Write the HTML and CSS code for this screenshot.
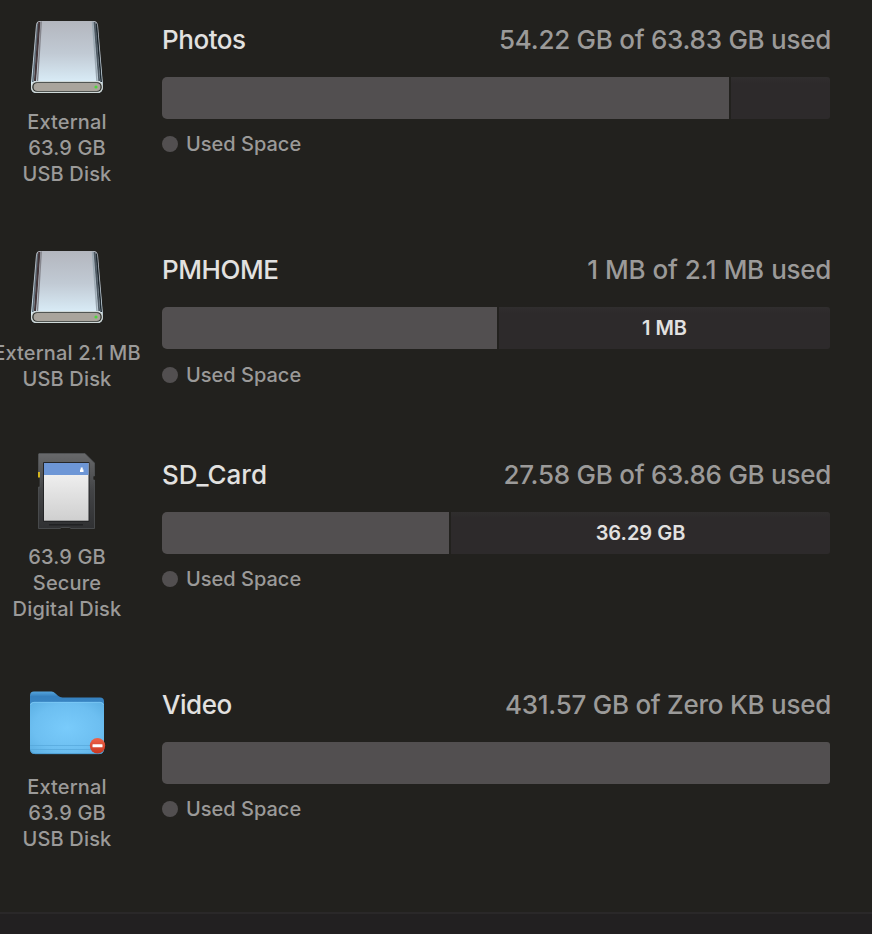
FILE: index.html
```html
<!DOCTYPE html>
<html lang="en">
<head>
    <meta charset="UTF-8">
    <meta name="viewport" content="width=device-width, initial-scale=1.0">
    <title>Storage</title>
    <link rel="stylesheet" href="styles.css">
</head>
<body>
    <svg class="defs" width="0" height="0">
        <defs>
            <linearGradient id="driveTop" x1="0" y1="0" x2="0" y2="1">
                <stop offset="0" stop-color="#b3b6be"/>
                <stop offset="0.45" stop-color="#c1cad4"/>
                <stop offset="0.85" stop-color="#d9ecf7"/>
            </linearGradient>
            <symbol id="drive" viewBox="0 0 80 80">
                <path d="M13 5h54q3 0 4 4l4.800 58v5q-.5 5-5 5H9q-4.500 0-5-5v-5L9 9q.5-4 4-4z" fill="url(#driveTop)"/>
                <path d="M10.800 7.500L5.800 66" stroke="#5d6b76" stroke-width="1.600" fill="none"/>
                <path d="M12.300 6L8 65" stroke="#43363a" stroke-width="2.200" fill="none"/>
                <path d="M14.300 5.500L10.500 65" stroke="#85868d" stroke-width="1.400" fill="none"/>
                <path d="M65.500 5.500L70 65" stroke="#9aa8b2" stroke-width="1.500" fill="none"/>
                <path d="M67.500 6L72.200 65" stroke="#4d5963" stroke-width="1.800" fill="none"/>
                <path d="M69.300 7.500L74.200 66" stroke="#1f2930" stroke-width="1.600" fill="none"/>
                <rect x="4.300" y="65.300" width="71.400" height="11.400" rx="5" fill="#ccd2ce"/>
                <rect x="5.300" y="66.300" width="69.400" height="9.400" rx="4.500" fill="#282c2a"/>
                <rect x="6.500" y="67" width="67" height="8" rx="4" fill="#a9a49c"/>
                <circle cx="69" cy="71" r="1.600" fill="#4fd53a"/>
            </symbol>
            <linearGradient id="cardBody" x1="0" y1="0" x2="0" y2="1">
                <stop offset="0" stop-color="#68696b"/>
                <stop offset="0.5" stop-color="#424345"/>
                <stop offset="1" stop-color="#303133"/>
            </linearGradient>
            <linearGradient id="cardLabel" x1="0" y1="0" x2="0" y2="1">
                <stop offset="0" stop-color="#f6f6f6"/>
                <stop offset="1" stop-color="#cfcfcf"/>
            </linearGradient>
            <symbol id="card" viewBox="0 0 80 80">
                <path d="M12 2.500h46l9.500 9.500v13H66v4h1.500v48.500H44l-1.500-1h-8l-1.500 1H11.500V36H13V21h-1.500V3z" fill="url(#cardBody)" stroke="#55575a" stroke-width="0.700"/>
                <rect x="11" y="21" width="2" height="5.500" fill="#d5b51e"/>
                <rect x="16" y="11" width="46.500" height="60" rx="1" fill="#242527"/>
                <rect x="17" y="12" width="44.500" height="57.700" fill="url(#cardLabel)"/>
                <rect x="17" y="12" width="44.500" height="12" fill="#6d96d6"/>
                <path d="M53.700 16.500h2v2h.8V21h-3.500v-2.500h.7z" fill="#fff"/>
                <path d="M22 73h34v1.500H22z" fill="#202123"/>
            </symbol>
            <linearGradient id="folderBack" x1="0" y1="0" x2="0" y2="1">
                <stop offset="0" stop-color="#55a5dd"/>
                <stop offset="0.25" stop-color="#3681bf"/>
                <stop offset="1" stop-color="#3b89c7"/>
            </linearGradient>
            <radialGradient id="folderFront" cx="0.5" cy="0.5" r="0.75">
                <stop offset="0" stop-color="#79cbfb"/>
                <stop offset="0.6" stop-color="#6dbff1"/>
                <stop offset="1" stop-color="#58ace0"/>
            </radialGradient>
            <linearGradient id="badge" x1="0" y1="0" x2="0" y2="1">
                <stop offset="0" stop-color="#ee6349"/>
                <stop offset="1" stop-color="#c93720"/>
            </linearGradient>
            <symbol id="folder" viewBox="0 0 80 80">
                <path d="M3 14.500q0-4 4-4h17.500q2 0 4 2l2.500 2.200q2 1.800 4.500 1.800H73q4 0 4 4v10H3z" fill="url(#folderBack)"/>
                <path d="M3 25q0-4 4-4h66q4 0 4 4v43q0 5-5 5H8q-5 0-5-5z" fill="url(#folderFront)"/>
                <path d="M3.500 24q.5-2.700 3.500-2.700h66q3 0 3.500 2.700" fill="none" stroke="#8ad2fb" stroke-width="0.600"/>
                <path d="M3 64.500h74M3 68.500h74" stroke="#55a6da" stroke-width="0.700"/>
                <path d="M3.300 69q.5 3.700 4.700 3.700h64q4 0 4.700-3.700" fill="none" stroke="#4595cc" stroke-width="0.800"/>
                <circle cx="70.500" cy="64.700" r="7.700" fill="url(#badge)"/>
                <rect x="65.500" y="63.300" width="10" height="3" rx="0.500" fill="#fff"/>
            </symbol>
        </defs>
    </svg>

    <main class="volumes">
        <section class="volume">
            <div class="device">
                <svg class="device-icon"><use href="#drive"/></svg>
                <p class="device-name">External<br>63.9 GB<br>USB Disk</p>
            </div>
            <div class="usage">
                <div class="heading">
                    <h2 class="name">Photos</h2>
                    <span class="summary">54.22 GB of 63.83 GB used</span>
                </div>
                <div class="bar">
                    <div class="used" style="width: 567px"></div>
                    <div class="free"></div>
                </div>
                <div class="legend"><span class="dot"></span>Used Space</div>
            </div>
        </section>

        <section class="volume compact shifted">
            <div class="device">
                <svg class="device-icon"><use href="#drive"/></svg>
                <p class="device-name">External 2.1 MB<br>USB Disk</p>
            </div>
            <div class="usage">
                <div class="heading">
                    <h2 class="name">PMHOME</h2>
                    <span class="summary short">1 MB of 2.1 MB used</span>
                </div>
                <div class="bar">
                    <div class="used" style="width: 335px"></div>
                    <div class="free">1 MB</div>
                </div>
                <div class="legend"><span class="dot"></span>Used Space</div>
            </div>
        </section>

        <section class="volume">
            <div class="device">
                <svg class="device-icon"><use href="#card"/></svg>
                <p class="device-name">63.9 GB<br>Secure<br>Digital Disk</p>
            </div>
            <div class="usage">
                <div class="heading">
                    <h2 class="name wide">SD_Card</h2>
                    <span class="summary">27.58 GB of 63.86 GB used</span>
                </div>
                <div class="bar">
                    <div class="used" style="width: 287px"></div>
                    <div class="free">36.29 GB</div>
                </div>
                <div class="legend"><span class="dot"></span>Used Space</div>
            </div>
        </section>

        <section class="volume">
            <div class="device">
                <svg class="device-icon"><use href="#folder"/></svg>
                <p class="device-name">External<br>63.9 GB<br>USB Disk</p>
            </div>
            <div class="usage">
                <div class="heading">
                    <h2 class="name">Video</h2>
                    <span class="summary">431.57 GB of Zero KB used</span>
                </div>
                <div class="bar">
                    <div class="used" style="width: 668px"></div>
                </div>
                <div class="legend"><span class="dot"></span>Used Space</div>
            </div>
        </section>
    </main>
    <footer class="footer"></footer>
</body>
</html>
```
FILE: styles.css
```css
* {
    box-sizing: border-box;
}

body {
    margin: 0;
    height: 934px;
    display: flex;
    flex-direction: column;
    overflow: hidden;
    background: #22211e;
    color: #9b9a99;
    font-family: Inter, "Liberation Sans", sans-serif;
    font-size: 20px;
    line-height: 26px;
}

.defs {
    position: absolute;
}

.volumes {
    flex: 1;
}

.volume {
    display: flex;
    height: 230px;
}

.volume.compact {
    height: 205px;
}

.device {
    display: flex;
    flex-direction: column;
    align-items: center;
    gap: 13px;
    width: 134px;
    padding-top: 16px;
}

.shifted .device {
    gap: 14px;
}

.device-icon {
    width: 80px;
    height: 80px;
}

.device-name {
    margin: 0;
    text-align: center;
    white-space: nowrap;
    font-weight: 500;
    letter-spacing: 0.15px;
}

.usage {
    width: 668px;
    margin-left: 28px;
    padding-top: 24px;
}

.heading {
    display: flex;
    justify-content: space-between;
    height: 32px;
    margin-right: -1px;
    font-size: 26px;
    line-height: 32px;
    white-space: nowrap;
}

.name {
    margin: 0;
    color: #e2e1e0;
    font-size: 26px;
    font-weight: 500;
    letter-spacing: -0.45px;
}

.name.wide {
    letter-spacing: 0;
}

.summary {
    font-weight: 500;
    letter-spacing: -0.26px;
}

.summary.short {
    letter-spacing: -0.3px;
    word-spacing: 0.7px;
}

.bar {
    display: flex;
    gap: 2px;
    height: 42px;
    margin-top: 21px;
    border-radius: 5px 3px 3px 5px;
    overflow: hidden;
}

.used {
    background: #524f50;
}

.free {
    flex: 1;
    background: linear-gradient(#302e2e, #2d2a2b 6px);
    color: #e2e1e0;
    font-weight: 600;
    line-height: 42px;
    text-align: center;
}

.legend {
    display: flex;
    align-items: center;
    gap: 8px;
    margin-top: 12px;
    font-weight: 500;
}

.shifted .legend {
    margin-top: 13px;
}

.dot {
    width: 16px;
    height: 16px;
    border-radius: 50%;
    background: #524f50;
}

.footer {
    height: 22px;
    border-top: 2px solid #2a2829;
    background: #222021;
}
```
